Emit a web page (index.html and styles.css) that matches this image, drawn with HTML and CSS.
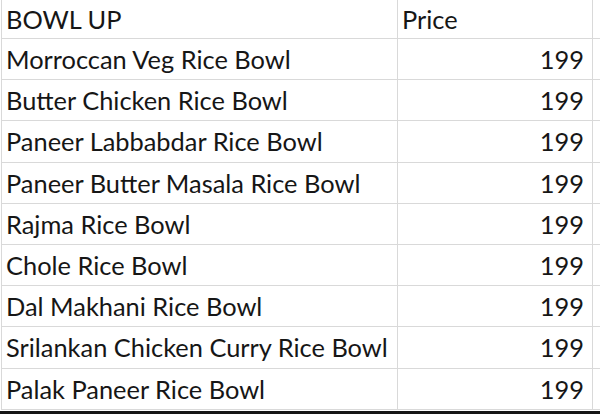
FILE: index.html
```html
<!DOCTYPE html>
<html>
<head>
<meta charset="utf-8">
<link rel="stylesheet" href="styles.css">
</head>
<body>
<div class="sheet">
  <div class="grid">
    <div class="cell first">BOWL UP</div><div class="cell">Price</div><div class="cell extra"></div>
    <div class="cell first">Morroccan Veg Rice Bowl</div><div class="cell num">199</div><div class="cell extra"></div>
    <div class="cell first">Butter Chicken Rice Bowl</div><div class="cell num">199</div><div class="cell extra"></div>
    <div class="cell first">Paneer Labbabdar Rice Bowl</div><div class="cell num">199</div><div class="cell extra"></div>
    <div class="cell first">Paneer Butter Masala Rice Bowl</div><div class="cell num">199</div><div class="cell extra"></div>
    <div class="cell first">Rajma Rice Bowl</div><div class="cell num">199</div><div class="cell extra"></div>
    <div class="cell first">Chole Rice Bowl</div><div class="cell num">199</div><div class="cell extra"></div>
    <div class="cell first">Dal Makhani Rice Bowl</div><div class="cell num">199</div><div class="cell extra"></div>
    <div class="cell first">Srilankan Chicken Curry Rice Bowl</div><div class="cell num">199</div><div class="cell extra"></div>
    <div class="cell first">Palak Paneer Rice Bowl</div><div class="cell num">199</div><div class="cell extra"></div>
  </div>
  <div class="edge"></div>
</div>
</body>
</html>
```
FILE: styles.css
```css
html, body {
  margin: 0;
  padding: 0;
  background: #ffffff;
}
.sheet {
  width: 600px;
  height: 414px;
  overflow: hidden;
  display: flex;
  flex-direction: column;
  padding-left: 1px;
  box-sizing: border-box;
}
.grid {
  display: grid;
  grid-template-columns: 397px 195px 1fr;
  grid-template-rows: 39px repeat(9, 41.2px);
  font-family: Lato, "Open Sans", sans-serif;
  font-size: 25.4px;
  color: #161616;
  flex: none;
}
.cell {
  border-right: 1px solid #d9d9d9;
  border-bottom: 1px solid #d9d9d9;
  box-sizing: border-box;
  padding-left: 4px;
  white-space: nowrap;
  overflow: hidden;
  display: flex;
  align-items: center;
}
.cell.first {
  border-left: 1px solid #d9d9d9;
  padding-left: 4px;
}
.cell.num {
  justify-content: flex-end;
  padding: 0 8px 0 0;
}
.cell.extra {
  border-right: none;
}
.edge {
  flex: 1;
  margin-top: 1px;
  margin-left: -1px;
  background: #151515;
}
```
